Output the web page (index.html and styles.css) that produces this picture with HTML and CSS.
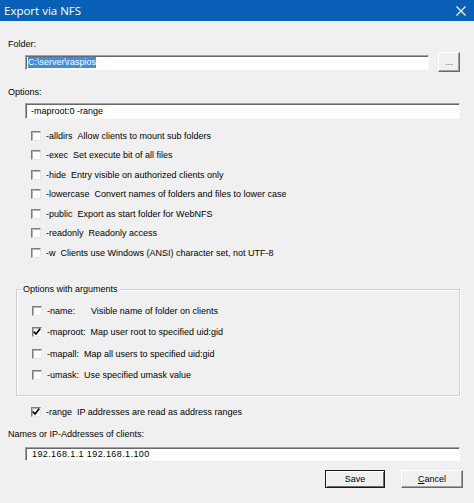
FILE: index.html
```html
<!DOCTYPE html>
<html>
<head>
<meta charset="utf-8">
<link rel="stylesheet" href="styles.css">
</head>
<body>
<div class="window">
  <div class="titlebar">
    <span class="title">Export via NFS</span>
    <svg class="close" width="10" height="10" viewBox="0 0 10 10"><path d="M0.5 0.5 L9.5 9.5 M9.5 0.5 L0.5 9.5" stroke="#fff" stroke-width="1.1" fill="none"/></svg>
  </div>
  <div class="content">
    <div class="label lbl-folder">Folder:</div>
    <div class="folder-row">
      <div class="textbox folder-box"><span class="sel">C:\server\raspios</span></div>
      <button class="btn browse">...</button>
    </div>
    <div class="label lbl-options">Options:</div>
    <div class="textbox options-box">-maproot:0 -range</div>
    <div class="checklist">
      <div class="check-row"><span class="cb"></span><span class="opt">-alldirs</span> <span>Allow clients to mount sub folders</span></div>
      <div class="check-row"><span class="cb"></span><span class="opt">-exec</span> <span>Set execute bit of all files</span></div>
      <div class="check-row"><span class="cb"></span><span class="opt">-hide</span> <span>Entry visible on authorized clients only</span></div>
      <div class="check-row"><span class="cb"></span><span class="opt">-lowercase</span> <span>Convert names of folders and files to lower case</span></div>
      <div class="check-row"><span class="cb"></span><span class="opt">-public</span> <span>Export as start folder for WebNFS</span></div>
      <div class="check-row"><span class="cb"></span><span class="opt">-readonly</span> <span>Readonly access</span></div>
      <div class="check-row"><span class="cb"></span><span class="opt">-w</span> <span>Clients use Windows (ANSI) character set, not UTF-8</span></div>
    </div>
    <fieldset class="group">
      <legend>Options with arguments</legend>
      <div class="group-rows">
        <div class="arg-row"><span class="cb"></span><span class="opt opt-wide">-name:</span> <span>Visible name of folder on clients</span></div>
        <div class="arg-row"><span class="cb checked"><svg width="8" height="8" viewBox="0 0 8 8"><path d="M0.8 3.6 L3 6 L7.2 0.8" stroke="#000" stroke-width="1.6" fill="none"/></svg></span><span class="opt">-maproot:</span> <span>Map user root to specified uid:gid</span></div>
        <div class="arg-row"><span class="cb"></span><span class="opt">-mapall:</span> <span>Map all users to specified uid:gid</span></div>
        <div class="arg-row"><span class="cb"></span><span class="opt">-umask:</span> <span>Use specified umask value</span></div>
      </div>
    </fieldset>
    <div class="check-row range-row"><span class="cb checked"><svg width="8" height="8" viewBox="0 0 8 8"><path d="M0.8 3.6 L3 6 L7.2 0.8" stroke="#000" stroke-width="1.6" fill="none"/></svg></span><span class="opt">-range</span> <span>IP addresses are read as address ranges</span></div>
    <div class="label lbl-names">Names or IP-Addresses of clients:</div>
    <div class="textbox names-box">192.168.1.1 192.168.1.100</div>
    <div class="buttons">
      <button class="btn default save">Save</button>
      <button class="btn cancel"><u>C</u>ancel</button>
    </div>
  </div>
</div>
</body>
</html>
```

FILE: styles.css
```css
html, body {
  margin: 0;
  padding: 0;
  background: #f0f0f0;
}

.window {
  width: 474px;
  height: 503px;
  background: #f0f0f0;
  font-family: "Liberation Sans", Arial, sans-serif;
  font-size: 9px;
  color: #000;
  overflow: hidden;
  box-sizing: border-box;
}

.titlebar {
  height: 21px;
  background: #0a60b6;
  color: #fff;
  display: flex;
  align-items: center;
  justify-content: space-between;
  padding: 0 8px 0 4px;
  box-sizing: border-box;
}

.title {
  font-family: "Open Sans", "Noto Sans", sans-serif;
  font-size: 11.5px;
  line-height: 21px;
}

.close {
  display: block;
}

.content {
  padding: 0 14px 0 8px;
}

.label {
  line-height: 14px;
  height: 14px;
  white-space: nowrap;
}

.lbl-folder {
  margin-top: 16px;
}

.folder-row {
  display: flex;
  align-items: center;
  gap: 9px;
  height: 20px;
  margin: 1px 0 0 17px;
}

.textbox {
  background: #fff;
  box-sizing: border-box;
  border: 1px solid;
  border-color: #a0a0a0 #fafafa #fafafa #a0a0a0;
  box-shadow: inset 1px 1px 0 #696969;
  padding: 0 3px;
  display: flex;
  align-items: center;
  white-space: nowrap;
}

.folder-box {
  flex: 1;
  height: 15px;
}

.sel {
  background: #3a8ee6;
  color: #fff;
  line-height: 11px;
  margin-left: -1px;
}

.btn {
  font-family: "Liberation Sans", Arial, sans-serif;
  font-size: 9px;
  color: #000;
  background: #f0f0f0;
  box-sizing: border-box;
  border: 1px solid;
  border-color: #fff #696969 #696969 #fff;
  box-shadow: inset -1px -1px 0 #a0a0a0;
  padding: 0;
  margin: 0;
  display: flex;
  align-items: center;
  justify-content: center;
}

.browse {
  width: 22px;
  height: 20px;
  color: #555;
}

.lbl-options {
  margin-top: 13px;
}

.options-box {
  height: 16px;
  margin: 4px 0 0 17px;
  padding-left: 5px;
}

.checklist {
  margin-top: 7px;
}

.check-row {
  display: flex;
  align-items: center;
  height: 19.5px;
  padding-left: 23px;
  white-space: pre;
}

.cb {
  width: 10px;
  height: 10px;
  box-sizing: border-box;
  background: #fff;
  border: 1px solid;
  border-color: #7d7d7d #e6e6e6 #e6e6e6 #7d7d7d;
  box-shadow: inset 1px 1px 0 #b5b5b5;
  margin-right: 5px;
  flex: none;
  display: flex;
  align-items: center;
  justify-content: center;
}

.cb svg {
  display: block;
}

.opt {
  margin-right: 5px;
}

.opt-wide {
  margin-right: 16px;
}

.group {
  margin: 19.5px 0 0 8px;
  padding: 0 0 9px 0;
  border: 1px solid #cfcfcf;
  box-shadow: 1px 1px 0 #fff, inset 1px 1px 0 #fff;
  min-width: 0;
}

.group legend {
  padding: 0 2px;
  margin-left: 4px;
  line-height: 14px;
}

.group-rows {
  padding-top: 4px;
}

.arg-row {
  display: flex;
  align-items: center;
  height: 21.5px;
  padding-left: 15px;
  white-space: pre;
}

.range-row {
  margin-top: 6px;
}

.lbl-names {
  margin-top: 5px;
}

.names-box {
  height: 14px;
  margin: 6px 0 0 17px;
  padding-left: 6px;
  letter-spacing: 0.4px;
}

.buttons {
  display: flex;
  justify-content: flex-end;
  gap: 16px;
  margin: 9.5px -3px 0 0;
}

.buttons .btn {
  height: 18px;
}

.save {
  width: 60px;
}

.cancel {
  width: 62px;
}

.default {
  border: 1px solid #1a1a1a;
  box-shadow: inset 1px 1px 0 #fff, inset -1px -1px 0 #696969;
}
```
